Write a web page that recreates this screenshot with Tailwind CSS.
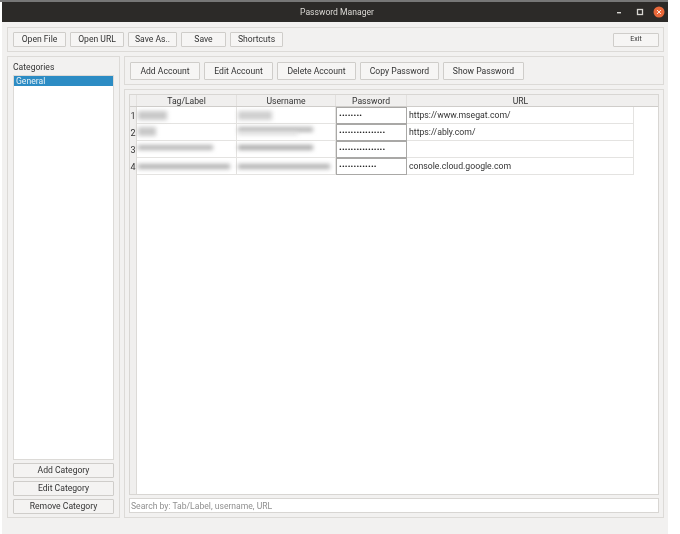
<!DOCTYPE html>
<html lang="en">
<head>
  <meta charset="utf-8" />
  <title>Password Manager</title>
  <script src="https://cdn.jsdelivr.net/npm/@tailwindcss/browser@4"></script>
</head>
<body class="bg-white w-[680px] h-[534px] overflow-hidden font-['Roboto','Noto_Sans',sans-serif] text-[8.6px] leading-none text-[#333]">

  <!-- top edge -->
  <div class="h-[2px] w-[668px] bg-[#777]"></div>

  <div class="w-[666px] h-[532px] ml-[2px] flex flex-col bg-[#f2f1f0] blur-[0.35px]">

    <!-- title bar -->
    <header class="h-[20px] shrink-0 bg-[#2c2a28] text-[#dcdad6] flex items-center relative">
      <span class="flex-1 text-center pl-[4px]">Password Manager</span>
      <div class="absolute right-[3px] top-0 h-full flex items-center">
        <svg width="8" height="8" viewBox="0 0 8 8"><rect x="1" y="4" width="4" height="1.4" fill="#d8d6d2"/></svg>
        <svg class="ml-[12px]" width="8" height="8" viewBox="0 0 8 8"><rect x="1.5" y="1.5" width="5" height="5" fill="none" stroke="#d8d6d2" stroke-width="1.3"/></svg>
        <svg class="ml-[9px]" width="12" height="12" viewBox="0 0 12 12"><circle cx="6" cy="6" r="5.5" fill="#e9683a"/><path d="M4 4l4 4M8 4l-4 4" stroke="#fbe4da" stroke-width="1"/></svg>
      </div>
    </header>

    <div class="flex-1 flex flex-col pl-[5px] pt-[5px] gap-[4px] w-[666px]">

      <!-- file toolbar -->
      <div class="h-[25px] w-[657px] shrink-0 border border-[#dcdad7] flex items-center pl-[5px] pr-[4px] gap-[4px]">
        <button class="w-[53px] h-[15px] border border-[#cfcdca] rounded-[1px] bg-[#f6f5f4]">Open File</button>
        <button class="w-[54px] h-[15px] border border-[#cfcdca] rounded-[1px] bg-[#f6f5f4]">Open URL</button>
        <button class="w-[49px] h-[15px] border border-[#cfcdca] rounded-[1px] bg-[#f6f5f4]">Save As..</button>
        <button class="w-[45px] h-[15px] border border-[#cfcdca] rounded-[1px] bg-[#f6f5f4]">Save</button>
        <button class="w-[53px] h-[15px] border border-[#cfcdca] rounded-[1px] bg-[#f6f5f4]">Shortcuts</button>
        <button class="w-[46px] h-[14px] ml-auto border border-[#cfcdca] rounded-[1px] bg-[#f6f5f4] text-[7px]">Exit</button>
      </div>

      <div class="h-[462px] w-[657px] shrink-0 flex gap-[4px]">

        <!-- categories -->
        <aside class="w-[113px] shrink-0 border border-[#dcdad7] flex flex-col px-[5px] pt-[6px] pb-[3px]">
          <div class="h-[9px] mb-[3px]">Categories</div>
          <div class="flex-1 bg-white border border-[#dcdad7]">
            <div class="h-[10px] bg-[#2c8cc4] text-[#e6f1f7] pl-[2px] flex items-center">General</div>
          </div>
          <div class="flex flex-col gap-[3px] mt-[3px]">
            <button class="h-[15px] border border-[#cfcdca] rounded-[1px] bg-[#f4f3f2]">Add Category</button>
            <button class="h-[15px] border border-[#cfcdca] rounded-[1px] bg-[#f4f3f2]">Edit Category</button>
            <button class="h-[15px] border border-[#cfcdca] rounded-[1px] bg-[#f4f3f2]">Remove Category</button>
          </div>
        </aside>

        <div class="w-[540px] shrink-0 flex flex-col gap-[4px]">

          <!-- account toolbar -->
          <div class="h-[29px] shrink-0 border border-[#dcdad7] flex items-center pl-[5px] pt-[1px] gap-[4px]">
            <button class="w-[70px] h-[18px] border border-[#cfcdca] rounded-[1px] bg-[#f6f5f4]">Add Account</button>
            <button class="w-[69px] h-[18px] border border-[#cfcdca] rounded-[1px] bg-[#f6f5f4]">Edit Account</button>
            <button class="w-[79px] h-[18px] border border-[#cfcdca] rounded-[1px] bg-[#f6f5f4]">Delete Account</button>
            <button class="w-[79px] h-[18px] border border-[#cfcdca] rounded-[1px] bg-[#f6f5f4]">Copy Password</button>
            <button class="w-[81px] h-[18px] border border-[#cfcdca] rounded-[1px] bg-[#f6f5f4]">Show Password</button>
          </div>

          <div class="flex-1 border border-[#dcdad7] px-[4px] pt-[4px] pb-[3px] flex flex-col">

            <!-- table -->
            <div class="h-[401px] border border-[#d8d6d3] bg-white flex flex-col">
              <div class="h-[12px] shrink-0 flex bg-[#f0efee] border-b border-[#cfcdca]">
                <div class="w-[7px] border-r border-[#e2e0de]"></div>
                <div class="w-[100px] border-r border-[#e2e0de] text-center pt-[2px]">Tag/Label</div>
                <div class="w-[99px] border-r border-[#e2e0de] text-center pt-[2px]">Username</div>
                <div class="w-[71px] border-r border-[#e2e0de] text-center pt-[2px]">Password</div>
                <div class="w-[227px] text-center pt-[2px]">URL</div>
              </div>
              <div class="flex-1 flex">
                <div class="w-[7px] bg-[#f0efee] border-r border-[#dcdad7] text-[9px]">
                  <div class="h-[17px] flex items-center justify-center pt-[1px]">1</div>
                  <div class="h-[17px] flex items-center justify-center pt-[1px]">2</div>
                  <div class="h-[17px] flex items-center justify-center pt-[1px]">3</div>
                  <div class="h-[17px] flex items-center justify-center pt-[1px]">4</div>
                </div>
                <div class="w-[497px] grid grid-cols-[100px_99px_71px_227px] grid-rows-[17px_17px_17px_17px] text-[8.7px]">
                  <!-- row 1 -->
                  <div class="border-b border-r border-[#e4e3e1] pl-[1px] pt-[4px]"><div class="w-[29px] h-[9px] bg-[#c8c8c8] blur-[2px]"></div></div>
                  <div class="border-b border-r border-[#e4e3e1] pl-[1px] pt-[4px]"><div class="w-[34px] h-[9px] bg-[#cfcfcf] blur-[2px]"></div></div>
                  <div class="border border-[#a9a8a6] bg-white flex items-center pl-[2px] text-[8px] tracking-[0.2px] text-[#222]">••••••••</div>
                  <div class="border-b border-r border-[#e4e3e1] flex items-center pl-[2px] pt-[1px]">https://www.msegat.com/</div>
                  <!-- row 2 -->
                  <div class="border-b border-r border-[#e4e3e1] pl-[1px] pt-[3px]"><div class="w-[18px] h-[9px] bg-[#c8c8c8] blur-[2px]"></div></div>
                  <div class="border-b border-r border-[#e4e3e1] pl-[1px] pt-[3px]">
                    <div class="w-[75px] h-[5px] bg-[#b5b5b5] blur-[2px]"></div>
                    <div class="w-[60px] h-[3px] bg-[#dedede] blur-[2px]"></div>
                  </div>
                  <div class="border border-[#a9a8a6] bg-white flex items-center pl-[2px] text-[8px] tracking-[0.2px] text-[#222]">••••••••••••••••</div>
                  <div class="border-b border-r border-[#e4e3e1] flex items-center pl-[2px] pt-[1px]">https://ably.com/</div>
                  <!-- row 3 -->
                  <div class="border-b border-r border-[#e4e3e1] pl-[1px] pt-[4px]"><div class="w-[75px] h-[5px] bg-[#b5b5b5] blur-[2px]"></div></div>
                  <div class="border-b border-r border-[#e4e3e1] pl-[1px] pt-[4px]"><div class="w-[75px] h-[5px] bg-[#a8a8a8] blur-[2px]"></div></div>
                  <div class="border border-[#a9a8a6] bg-white flex items-center pl-[2px] text-[8px] tracking-[0.2px] text-[#222]">••••••••••••••••</div>
                  <div class="border-b border-r border-[#e4e3e1]"></div>
                  <!-- row 4 -->
                  <div class="border-b border-r border-[#e4e3e1] pl-[1px] pt-[6px]"><div class="w-[92px] h-[5px] bg-[#b0b0b0] blur-[2px]"></div></div>
                  <div class="border-b border-r border-[#e4e3e1] pl-[1px] pt-[6px]"><div class="w-[92px] h-[5px] bg-[#b0b0b0] blur-[2px]"></div></div>
                  <div class="border border-[#a9a8a6] bg-white flex items-center pl-[2px] text-[8px] tracking-[0.2px] text-[#222]">•••••••••••••</div>
                  <div class="border-b border-r border-[#e4e3e1] flex items-center pl-[2px] pt-[1px]">console.cloud.google.com</div>
                </div>
              </div>
            </div>

            <input class="mt-[3px] h-[15px] w-full bg-white border border-[#d8d6d3] px-[1px] text-[8.6px] placeholder:text-[#8f8f8f] outline-none" placeholder="Search by: Tab/Label, username, URL" />
          </div>
        </div>
      </div>
    </div>
  </div>
</body>
</html>
